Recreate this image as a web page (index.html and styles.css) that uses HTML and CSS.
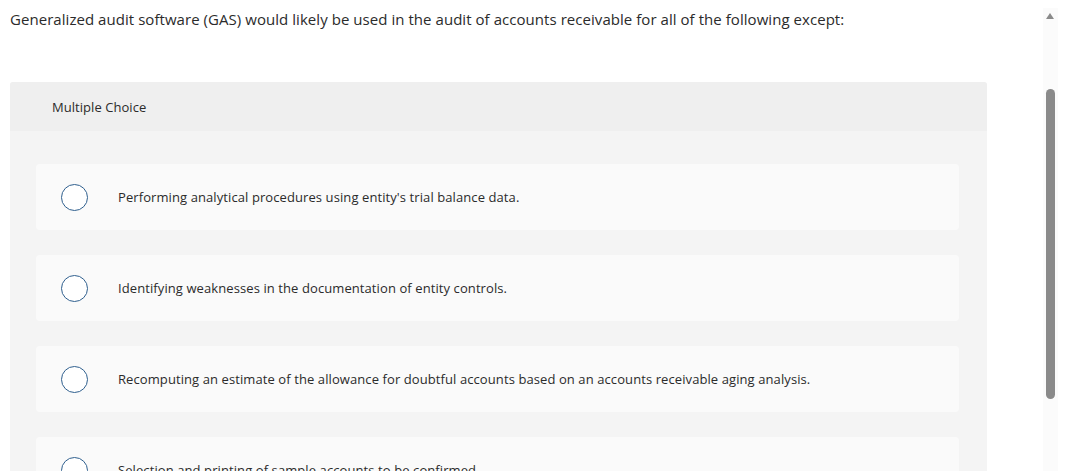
FILE: index.html
```html
<!DOCTYPE html>
<html>
<head>
<meta charset="utf-8">
<link rel="stylesheet" href="styles.css">
</head>
<body>
<div class="page">
  <main class="content">
    <p class="question">Generalized audit software (GAS) would likely be used in the audit of accounts receivable for all of the following except:</p>
    <section class="panel">
      <header class="panel-head">Multiple Choice</header>
      <div class="panel-body">
        <label class="option"><span class="radio"></span><span class="option-text">Performing analytical procedures using entity's trial balance data.</span></label>
        <label class="option"><span class="radio"></span><span class="option-text">Identifying weaknesses in the documentation of entity controls.</span></label>
        <label class="option"><span class="radio"></span><span class="option-text">Recomputing an estimate of the allowance for doubtful accounts based on an accounts receivable aging analysis.</span></label>
        <label class="option"><span class="radio"></span><span class="option-text">Selection and printing of sample accounts to be confirmed.</span></label>
      </div>
    </section>
  </main>
  <div class="scrollbar">
    <span class="arrow"></span>
    <span class="thumb"></span>
  </div>
</div>
</body>
</html>
```

FILE: styles.css
```css
html, body {
  margin: 0;
  padding: 0;
  background: #ffffff;
  height: 471px;
  overflow: hidden;
}
body {
  font-family: "Open Sans", "Liberation Sans", sans-serif;
  color: #333333;
}
.page {
  display: flex;
  height: 471px;
  overflow: hidden;
}
.content {
  width: 1043px;
  flex: none;
}
.question {
  margin: 0;
  padding: 9px 0 0 10px;
  font-size: 15px;
  line-height: 20px;
  letter-spacing: 0.05px;
  color: #2b2b2b;
}
.panel {
  margin: 53px 0 0 10px;
  width: 977px;
  background: #f4f4f4;
  border-radius: 3px 3px 0 0;
}
.panel-head {
  height: 49px;
  display: flex;
  align-items: center;
  padding-left: 42px;
  background: #efefef;
  border-radius: 3px 3px 0 0;
  font-size: 13px;
  letter-spacing: 0.05px;
  color: #2b2b2b;
}
.panel-body {
  display: flex;
  flex-direction: column;
  gap: 25px;
  padding: 33px 28px 40px 26px;
}
.option {
  height: 66px;
  display: flex;
  align-items: center;
  background: #fafafa;
  border-radius: 4px;
  padding-left: 25px;
}
.radio {
  width: 25px;
  height: 25px;
  border: 1.5px solid #2f5f8e;
  border-radius: 50%;
  background: #ffffff;
  flex: none;
}
.option-text {
  margin-left: 30px;
  font-size: 13px;
  letter-spacing: 0.09px;
  color: #2b2b2b;
}
.scrollbar {
  width: 15px;
  margin-top: 8px;
  background: #fbfbfb;
  position: relative;
  flex: none;
}
.arrow {
  position: absolute;
  top: 5px;
  left: 3px;
  width: 0;
  height: 0;
  border-left: 4.5px solid transparent;
  border-right: 4.5px solid transparent;
  border-bottom: 6px solid #8a8a8a;
}
.thumb {
  position: absolute;
  top: 81px;
  left: 3px;
  width: 9px;
  height: 310px;
  border-radius: 5px;
  background: #8a8a8a;
}
```
